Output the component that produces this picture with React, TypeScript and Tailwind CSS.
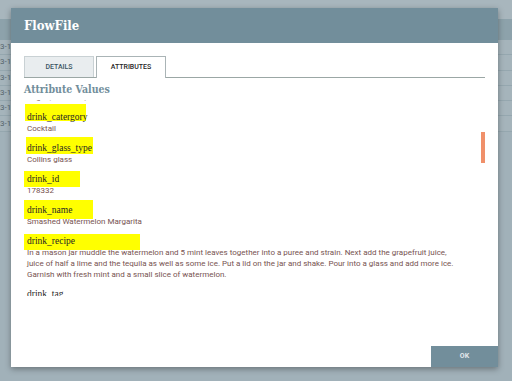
import React from "react";

const rows = [0, 1, 2, 3, 4, 5];

const attrs = [
  { name: "drink_alcoholic", value: ["Sugar / Salt Rim, Garnish with Lime"], hl: null },
  { name: "drink_catergory", value: ["Cocktail"], hl: { l: -2, w: 61, t: -13, h: 17 } },
  { name: "drink_glass_type", value: ["Collins glass"], hl: { l: -1, w: 67, t: -11, h: 17 } },
  { name: "drink_id", value: ["178332"], hl: { l: -6, w: 59, t: -8, h: 16 } },
  { name: "drink_name", value: ["Smashed Watermelon Margarita"], hl: { l: -9, w: 75, t: -10, h: 19 } },
  {
    name: "drink_recipe",
    value: [
      "In a mason jar muddle the watermelon and 5 mint leaves together into a puree and strain. Next add the grapefruit juice,",
      "juice of half a lime and the tequila as well as some ice. Put a lid on the jar and shake. Pour into a glass and add more ice.",
      "Garnish with fresh mint and a small slice of watermelon.",
    ],
    hl: { l: -11, w: 124, t: -7, h: 16 },
  },
  { name: "drink_tag", value: ["Summer"], hl: null },
];

export default function App() {
  return (
    <div className="relative w-[512px] h-[381px] overflow-hidden bg-[#a1b1b9] font-['Roboto',sans-serif]">
      {/* dimmed page behind the dialog */}
      <div className="h-[19px] bg-[#a8b6bd]" />
      <div className="h-[21px] bg-[#8da2ab]" />
      {rows.map((r) => (
        <div key={r} className="h-[15.3px] bg-[#a5b4bb] border-b border-[#95a7af] flex items-center text-[8px] text-[#56666d]">
          3-1a
        </div>
      ))}

      {/* dialog */}
      <div className="absolute left-[11px] top-[8px] w-[487px] h-[359px] bg-white flex flex-col shadow-[0_2px_6px_rgba(0,0,0,0.35)]">
        <div className="h-[35px] shrink-0 bg-[#728e9b] flex items-center px-[13px]">
          <span className="text-white font-bold text-[13px] font-['DejaVu_Serif_Condensed','DejaVu_Serif',serif]">FlowFile</span>
        </div>

        <div className="flex-1 flex flex-col px-[13px] pt-[13px] min-h-0">
          <div className="flex items-end border-b border-[#9ba7a5] h-[22px]">
            <div className="w-[70px] h-[21px] bg-[#e9edef] border border-[#c9d1d4] border-b-0 flex items-center justify-center text-[7px] font-medium text-[#3b5563]">
              DETAILS
            </div>
            <div className="ml-[2px] w-[70px] h-[22px] bg-white border border-[#aab4b6] border-b-0 -mb-px flex items-center justify-center text-[7px] font-medium text-[#262626]">
              ATTRIBUTES
            </div>
          </div>

          <div className="mt-[4px] h-[15px] leading-[15px] text-[10.5px] font-bold text-[#728e9b] font-['DejaVu_Serif_Condensed','DejaVu_Serif',serif]">
            Attribute Values
          </div>

          <div className="relative mt-[3px] h-[196px] overflow-hidden">
            <div className="-mt-[20px] pl-[3px] pr-[14px]">
              {attrs.map((a) => (
                <div key={a.name} className="mb-[8px]">
                  <div className="relative h-[12px] text-[9.5px] leading-[12px] text-[#262626] font-['Liberation_Serif',serif]">
                    {a.hl && (
                      <span
                        className="absolute bg-[#ffff00]"
                        style={{ left: a.hl.l, width: a.hl.w, top: 6 + a.hl.t, height: a.hl.h }}
                      />
                    )}
                    <span className="relative">{a.name}</span>
                  </div>
                  {a.value.map((line) => (
                    <div key={line} className="text-[8px] leading-[11px] text-[#775351] whitespace-nowrap">
                      {line}
                    </div>
                  ))}
                </div>
              ))}
            </div>
            <div className="absolute right-0 top-[32px] w-[4px] h-[31px] bg-[#f0906a]" />
          </div>
        </div>

        <div className="flex justify-end shrink-0">
          <div className="w-[67px] h-[21px] bg-[#728e9b] flex items-center justify-center text-[7px] font-bold text-[#e2e8eb]">
            OK
          </div>
        </div>
      </div>
    </div>
  );
}
